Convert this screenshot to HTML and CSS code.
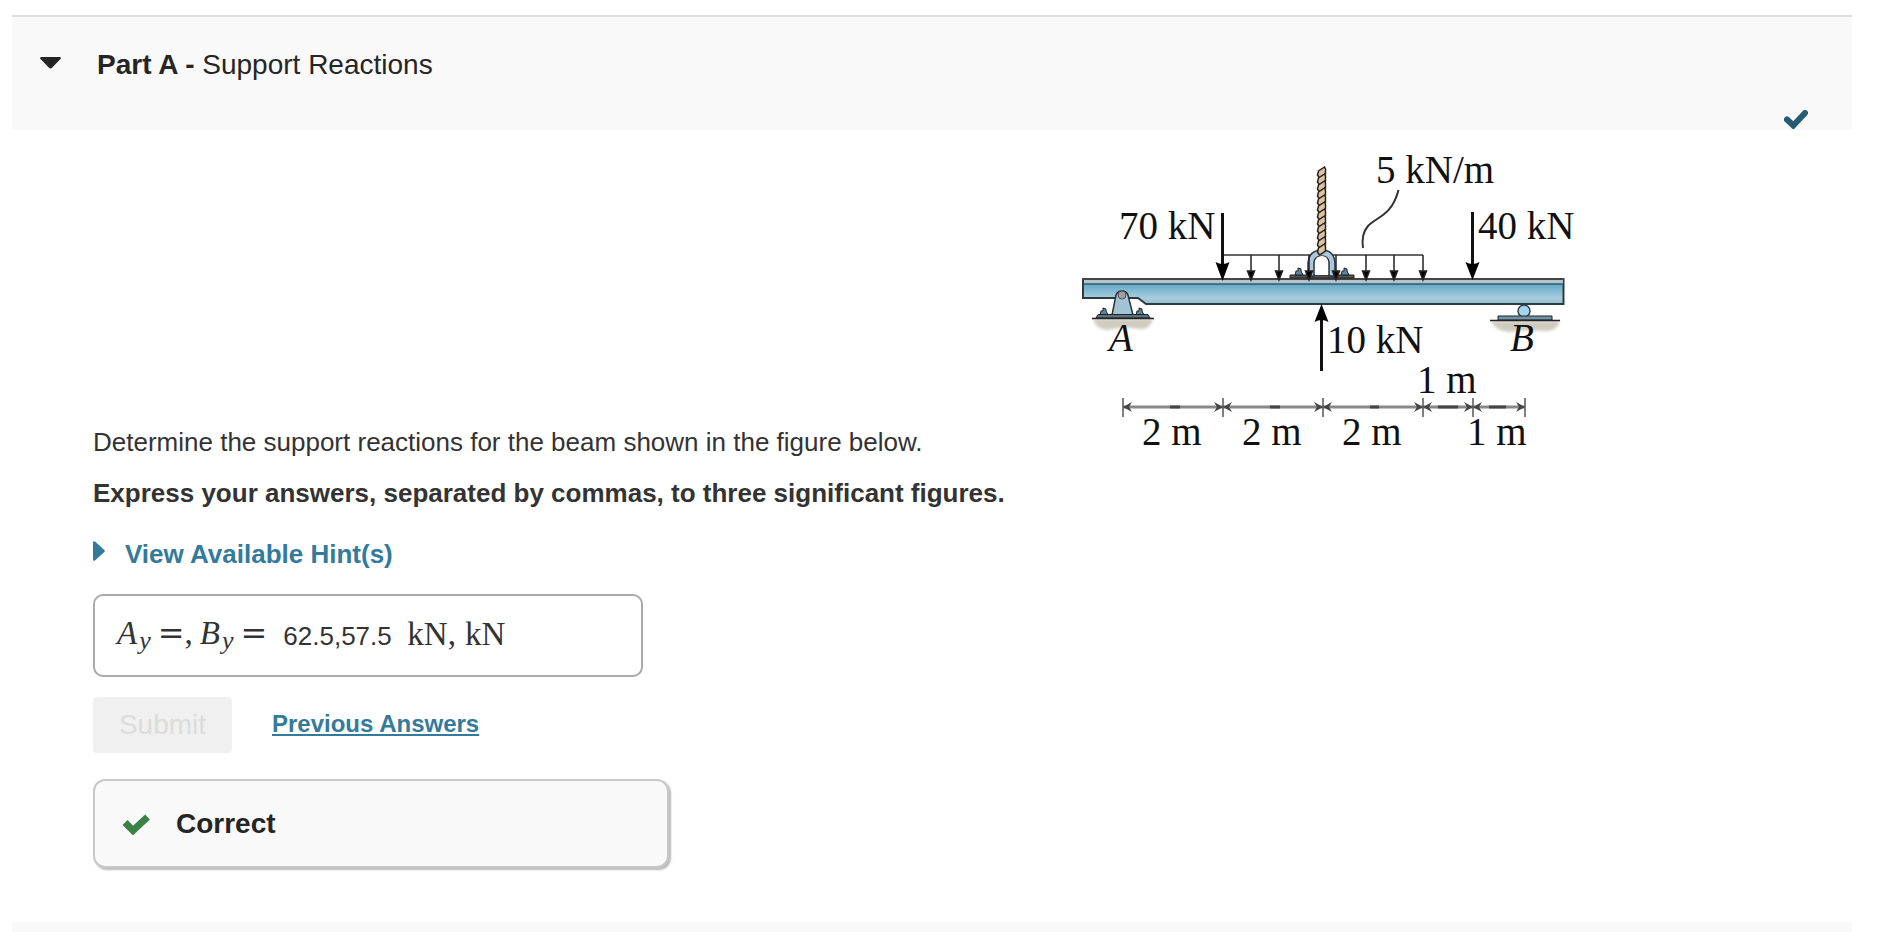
FILE: index.html
```html
<!DOCTYPE html>
<html lang="en">
<head>
<meta charset="utf-8">
<title>Part A - Support Reactions</title>
<link rel="stylesheet" href="styles.css">
</head>
<body>
<main class="page">
  <header class="part-header">
    <button class="part-toggle" type="button" aria-label="Collapse part" aria-expanded="true">
      <svg width="21" height="12" viewBox="0 0 21 12"><path d="M1 0H20Q21.500 1 20.500 2L12 10.800Q10.500 12.200 9 10.800L.5 2Q-.5 1 1 0Z" fill="#252525"/></svg>
    </button>
    <h1 class="part-title"><strong>Part A -</strong> Support Reactions</h1>
    <svg class="part-status" width="24" height="19" viewBox="0 0 24 19" role="img" aria-label="Completed"><path d="M3 9.500L9.300 15.500L21 3" fill="none" stroke="#255c74" stroke-width="6" stroke-linecap="round"/></svg>
  </header>

  <section class="part-body">
    <div class="problem">
      <p class="question">Determine the support reactions for the beam shown in the figure below.</p>
      <svg class="figure" width="530" height="318" viewBox="0 0 530 318" role="img" aria-label="Beam with loads and supports">
        <defs>
          <linearGradient id="web" x1="0" y1="0" x2="0" y2="1">
            <stop offset="0" stop-color="#5c9fbd"/><stop offset=".25" stop-color="#68abc8"/><stop offset=".75" stop-color="#a9cddd"/><stop offset="1" stop-color="#8fbdd1"/>
          </linearGradient>
          <filter id="soft" x="-20%" y="-40%" width="140%" height="180%" color-interpolation-filters="sRGB"><feGaussianBlur stdDeviation="1.500"/></filter>
          <path id="load" d="M0 115V132M-3.500 131H3.500L0 140Z" stroke="#222" stroke-width="1.500"/>
          <path id="bolt" d="M-4 0L-3 -4H-1V-7L2 -6V-4L4 0Z" fill="#5a87a0" stroke="#222" stroke-width="1"/>
          <path id="head" d="M0 0L9 -5L6 0L9 5Z" fill="#444"/>
          <path id="strand" d="M-4 3L-3 -1L3 -5L4 -3L4 2L-2 6Z" fill="#d9c3a0" stroke="#2b241d" stroke-width="1.500"/>
        </defs>

        <g fill="#cfccbf" filter="url(#soft)">
          <path d="M23 179H83Q80 190 70 189Q52 186 38 190Q26 190 23 179Z"/>
          <path d="M421 181H490Q487 192 474 191Q455 189 440 192Q425 191 421 181Z"/>
        </g>

        <path d="M13 139H493.500V164H76L68 158H13Z" fill="url(#web)" stroke="#2f3a40" stroke-width="2"/>
        <path d="M14 140H493V144H14Z" fill="#b4c4cd"/>
        <path d="M14 144H493" stroke="#315b70" stroke-width="1.500"/>
        <path d="M12 139H494" stroke="#444" stroke-width="2"/>

        <path d="M42 175L46 155A6.500 6.500 0 0 1 58 155L63 175Z" fill="#a3c2d4" stroke="#26343c" stroke-width="1.500"/>
        <circle cx="52" cy="155" r="4" fill="#a29fa3" stroke="#514f53"/>
        <use href="#bolt" x="34" y="175"/><use href="#bolt" x="70" y="175"/>
        <path d="M28 174.500H78L80 178H26Z" fill="#577485" stroke="#222"/>
        <path d="M22 178.500H84" stroke="#222" stroke-width="1.500"/>
        <circle cx="454" cy="171" r="6" fill="#a6d5f0" stroke="#2b414d" stroke-width="1.500"/>
        <path d="M428 176H482V180H428Z" fill="#6e94aa" stroke="#222"/>
        <path d="M420 180.500H490" stroke="#222" stroke-width="1.500"/>

        <path d="M153 115H353" stroke="#333" stroke-width="1.500"/>
        <use href="#load" x="181"/><use href="#load" x="209"/><use href="#load" x="296"/><use href="#load" x="324"/><use href="#load" x="353"/>
        <path d="M220 135H284V138H220Z" fill="#555" stroke="#222"/>
        <use href="#bolt" x="229" y="135"/><use href="#bolt" x="275" y="135"/>
        <path d="M238 136V123Q239 110 252 110Q264 110 265 123V136H259V122Q258 116 252 116Q245 116 244 122V136Z" fill="#adc7da" stroke="#27343d" stroke-width="1.500"/>
        <path d="M245 135V122Q246 116 252 116Q257 116 258 122V135Z" fill="#fff"/>
        <use href="#load" x="239"/><use href="#load" x="266"/>
        <g>
          <use href="#strand" x="251.500" y="32"/><use href="#strand" x="251.500" y="39"/><use href="#strand" x="251.500" y="46"/><use href="#strand" x="251.500" y="53"/><use href="#strand" x="251.500" y="60"/><use href="#strand" x="251.500" y="67"/><use href="#strand" x="251.500" y="74"/><use href="#strand" x="251.500" y="81"/><use href="#strand" x="251.500" y="88"/><use href="#strand" x="251.500" y="95"/><use href="#strand" x="251.500" y="102"/><use href="#strand" x="251.500" y="109"/>
        </g>

        <g stroke="#111" stroke-width="3">
          <path d="M152.500 73V125M402.500 72V125M251.500 178V231"/>
        </g>
        <path d="M145.500 122Q152.500 126 159.500 122L152.500 141ZM395.500 122Q402.500 126 409.500 122L402.500 140ZM244.500 182Q251.500 178 258.500 182L251.500 164Z" fill="#000"/>
        <path d="M328.500 50C322 76 306 77 298 86Q291 94 293 108" fill="none" stroke="#333" stroke-width="2"/>

        <path d="M53 267H455" stroke="#888" stroke-width="3"/>
        <path d="M100 267H110M200 267H210M300 267H309M368 267H388M419 267H436" stroke="#444" stroke-width="3"/>
        <path d="M53 258V277M153 258V277M253 258V277M353 258V277M403 258V277M455 258V277" stroke="#555" stroke-width="1.500"/>
        <use href="#head" x="53" y="267"/><use href="#head" x="153" y="267"/><use href="#head" x="253" y="267"/><use href="#head" x="353" y="267"/><use href="#head" x="403" y="267"/>
        <g transform="scale(-1 1)"><use href="#head" x="-153" y="267"/><use href="#head" x="-253" y="267"/><use href="#head" x="-353" y="267"/><use href="#head" x="-403" y="267"/><use href="#head" x="-455" y="267"/></g>

        <g class="figure-text">
          <text x="49" y="99">70 kN</text>
          <text x="306" y="43">5 kN/m</text>
          <text x="408" y="99">40 kN</text>
          <text x="257" y="213">10 kN</text>
          <text x="39" y="211" font-style="italic">A</text>
          <text x="440" y="211" font-style="italic">B</text>
          <text x="347" y="253">1 m</text>
          <text x="72" y="305">2 m</text>
          <text x="172" y="305">2 m</text>
          <text x="272" y="305">2 m</text>
          <text x="397" y="305">1 m</text>
        </g>
      </svg>
    </div>

    <p class="instructions">Express your answers, separated by commas, to three significant figures.</p>

    <button class="hints" type="button">
      <svg width="12" height="20" viewBox="0 0 12 20"><path d="M0 1Q.5-.5 2 .6L11.300 9Q12.300 10 11.300 11L2 19.400Q.5 20.500 0 19Z" fill="#347a9b"/></svg>
      <span>View Available Hint(s)</span>
    </button>

    <form class="answer-form">
      <div class="answer">
        <label class="math quantity" for="answer"><i>A</i><sub>y</sub><span class="equals">=</span>,<i class="second">B</i><sub>y</sub><span class="equals">=</span></label>
        <input class="answer-value" id="answer" type="text" value="62.5,57.5" readonly>
        <span class="math units">kN,<span class="unit">kN</span></span>
      </div>
      <div class="actions">
        <button class="submit" type="submit" disabled>Submit</button>
        <a class="previous" href="#previous">Previous Answers</a>
      </div>
    </form>

    <div class="feedback" role="status">
      <svg width="29" height="22" viewBox="0 0 29 22" aria-hidden="true"><path d="M3 9.500L11 17.500L25.500 4" fill="none" stroke="#3a8144" stroke-width="7" stroke-linejoin="miter"/></svg>
      <strong>Correct</strong>
    </div>
  </section>
  <div class="next-part"></div>
</main>
</body>
</html>
```
FILE: styles.css
```css
* {
  box-sizing: border-box;
}

body {
  margin: 0;
  background: #fff;
  color: #333;
  font: 26px/32px "Liberation Sans", Arial, sans-serif;
}

button,
input {
  margin: 0;
  padding: 0;
  border: 0;
  background: none;
  color: inherit;
  font: inherit;
}

svg {
  display: block;
  flex: none;
}

.page {
  display: flex;
  flex-direction: column;
  min-height: 100vh;
  padding: 15px 26px 0 12px;
}

.part-header {
  display: flex;
  align-items: flex-start;
  padding: 31px 44px 1px 28px;
  border-top: 2px solid #dddfde;
  background: #f9f9f9;
}

.part-toggle {
  padding: 9px 0;
}

.part-title {
  flex: 1;
  margin: 0 0 47px 36px;
  color: #252525;
  font-size: 28px;
  font-weight: 400;
  line-height: 34px;
}

.part-status {
  align-self: flex-end;
}

.part-body {
  padding: 10px 0 54px 81px;
}

.problem {
  display: grid;
  grid-template-columns: 5fr 4fr;
  align-items: end;
}

.question,
.instructions {
  margin: 0;
}

.instructions {
  margin-top: 19px;
  font-weight: 700;
}

.figure-text {
  fill: #111;
  font-family: "Liberation Serif", "Times New Roman", serif;
  font-size: 39px;
}

.hints {
  display: flex;
  gap: 20px;
  margin: 29px 0 24px;
  color: #347a9b;
  font-weight: 700;
}

.hints svg {
  margin-top: 3px;
}

.answer {
  display: flex;
  align-items: center;
  width: 550px;
  max-width: 100%;
  min-height: 83px;
  padding: 0 22px;
  border: 2px solid #aaa;
  border-radius: 10px;
}

.math {
  font-family: "Liberation Serif", "Times New Roman", serif;
  font-size: 33px;
  white-space: nowrap;
}

.quantity {
  padding-bottom: 6px;
}

.units {
  padding-bottom: 3px;
}

.math sub {
  margin-left: 2px;
  font-size: 26px;
  font-style: italic;
  line-height: 0;
  vertical-align: -5px;
}

.equals {
  margin-left: 7px;
  font-family: "DejaVu Serif", serif;
  font-size: 32px;
  line-height: 0;
}

.second {
  margin-left: 7px;
}

.answer-value {
  width: 112px;
  margin: 0 12px 0 16px;
}

.unit {
  margin-left: 9px;
}

.actions {
  display: flex;
  align-items: center;
  gap: 40px;
  margin: 20px 0 26px;
}

.submit {
  width: 139px;
  height: 56px;
  border-radius: 4px;
  background: #f0f0f0;
  color: #dcdcdc;
  font-size: 28px;
}

.previous {
  color: #347a9b;
  font-size: 24px;
  font-weight: 700;
  line-height: 30px;
  padding-bottom: 2px;
  text-decoration-thickness: 2px;
  text-underline-offset: 2px;
}

.feedback {
  display: flex;
  align-items: center;
  gap: 25px;
  width: 576px;
  max-width: 100%;
  min-height: 89px;
  padding: 0 27px;
  border: 2px solid #c8c8c8;
  border-radius: 12px;
  background: #f9f9f9;
  box-shadow: 2px 2px 2px #bbb;
  color: #252525;
  font-size: 28px;
}

.next-part {
  flex: 1;
  min-height: 10px;
  background: #f9f9f9;
}
```
